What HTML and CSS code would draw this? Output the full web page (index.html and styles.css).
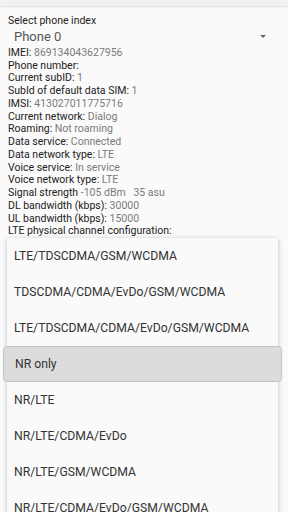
FILE: index.html
```html
<!DOCTYPE html>
<html>
<head>
<meta charset="utf-8">
<link rel="stylesheet" href="styles.css">
</head>
<body>
<div class="topbar"></div>
<main class="content">
  <div class="section-label">Select phone index</div>
  <div class="spinner">
    <span class="spinner-value">Phone 0</span>
    <span class="spinner-arrow"></span>
  </div>
  <ul class="info">
    <li><b>IMEI:</b> <span>869134043627956</span></li>
    <li><b>Phone number:</b></li>
    <li><b>Current subID:</b> <span>1</span></li>
    <li><b>SubId of default data SIM:</b> <span>1</span></li>
    <li><b>IMSI:</b> <span>413027011775716</span></li>
    <li><b>Current network:</b> <span>Dialog</span></li>
    <li><b>Roaming:</b> <span>Not roaming</span></li>
    <li><b>Data service:</b> <span>Connected</span></li>
    <li><b>Data network type:</b> <span>LTE</span></li>
    <li><b>Voice service:</b> <span>In service</span></li>
    <li><b>Voice network type:</b> <span>LTE</span></li>
    <li><b>Signal strength</b> <span>-105 dBm &nbsp; 35 asu</span></li>
    <li><b>DL bandwidth (kbps):</b> <span>30000</span></li>
    <li><b>UL bandwidth (kbps):</b> <span>15000</span></li>
    <li><b>LTE physical channel configuration:</b></li>
  </ul>
  <div class="divider"></div>
</main>
<div class="popup">
  <div class="item">LTE/TDSCDMA/GSM/WCDMA</div>
  <div class="item">TDSCDMA/CDMA/EvDo/GSM/WCDMA</div>
  <div class="item">LTE/TDSCDMA/CDMA/EvDo/GSM/WCDMA</div>
  <div class="item selected">NR only</div>
  <div class="item">NR/LTE</div>
  <div class="item">NR/LTE/CDMA/EvDo</div>
  <div class="item">NR/LTE/GSM/WCDMA</div>
  <div class="item">NR/LTE/CDMA/EvDo/GSM/WCDMA</div>
</div>
</body>
</html>
```
FILE: styles.css
```css
html, body {
  margin: 0;
  padding: 0;
  background: #fafafa;
  width: 288px;
  height: 512px;
  overflow: hidden;
  font-family: Roboto, "Noto Sans", sans-serif;
  position: relative;
}
.topbar {
  height: 6px;
  background: #f1f1f1;
  box-shadow: 0 1px 2px rgba(0,0,0,0.12);
}
.content {
  padding: 8px 8px 0 8px;
}
.section-label {
  font-size: 10.5px;
  color: #222;
  line-height: 13px;
}
.spinner {
  display: flex;
  align-items: center;
  justify-content: space-between;
  height: 18px;
  padding: 0 14px 2px 6px;
}
.spinner-value {
  font-size: 13px;
  color: #555;
}
.spinner-arrow {
  width: 0;
  height: 0;
  border-left: 3.5px solid transparent;
  border-right: 3.5px solid transparent;
  border-top: 3.5px solid #666;
}
.info {
  list-style: none;
  margin: 0;
  padding: 0;
  font-size: 10.5px;
  line-height: 12.73px;
}
.info b {
  font-weight: normal;
  color: #222;
}
.info span {
  color: #7a7a7a;
}
.divider {
  margin-top: 3px;
  height: 1px;
  background: #d8d8d8;
}
.popup {
  position: absolute;
  left: 7px;
  top: 238px;
  width: 271px;
  background: #fafafa;
  box-shadow: 0 1px 5px rgba(0,0,0,0.25);
  border-radius: 2px;
}
.item {
  height: 36px;
  display: flex;
  align-items: center;
  padding-left: 7px;
  font-size: 12.2px;
  color: #333;
}
.item.selected {
  margin: 0 -4px;
  padding-left: 11px;
  background: #dcdcdc;
  border: 1px solid #c4c4c4;
  border-radius: 4px;
  height: 34px;
}
```
